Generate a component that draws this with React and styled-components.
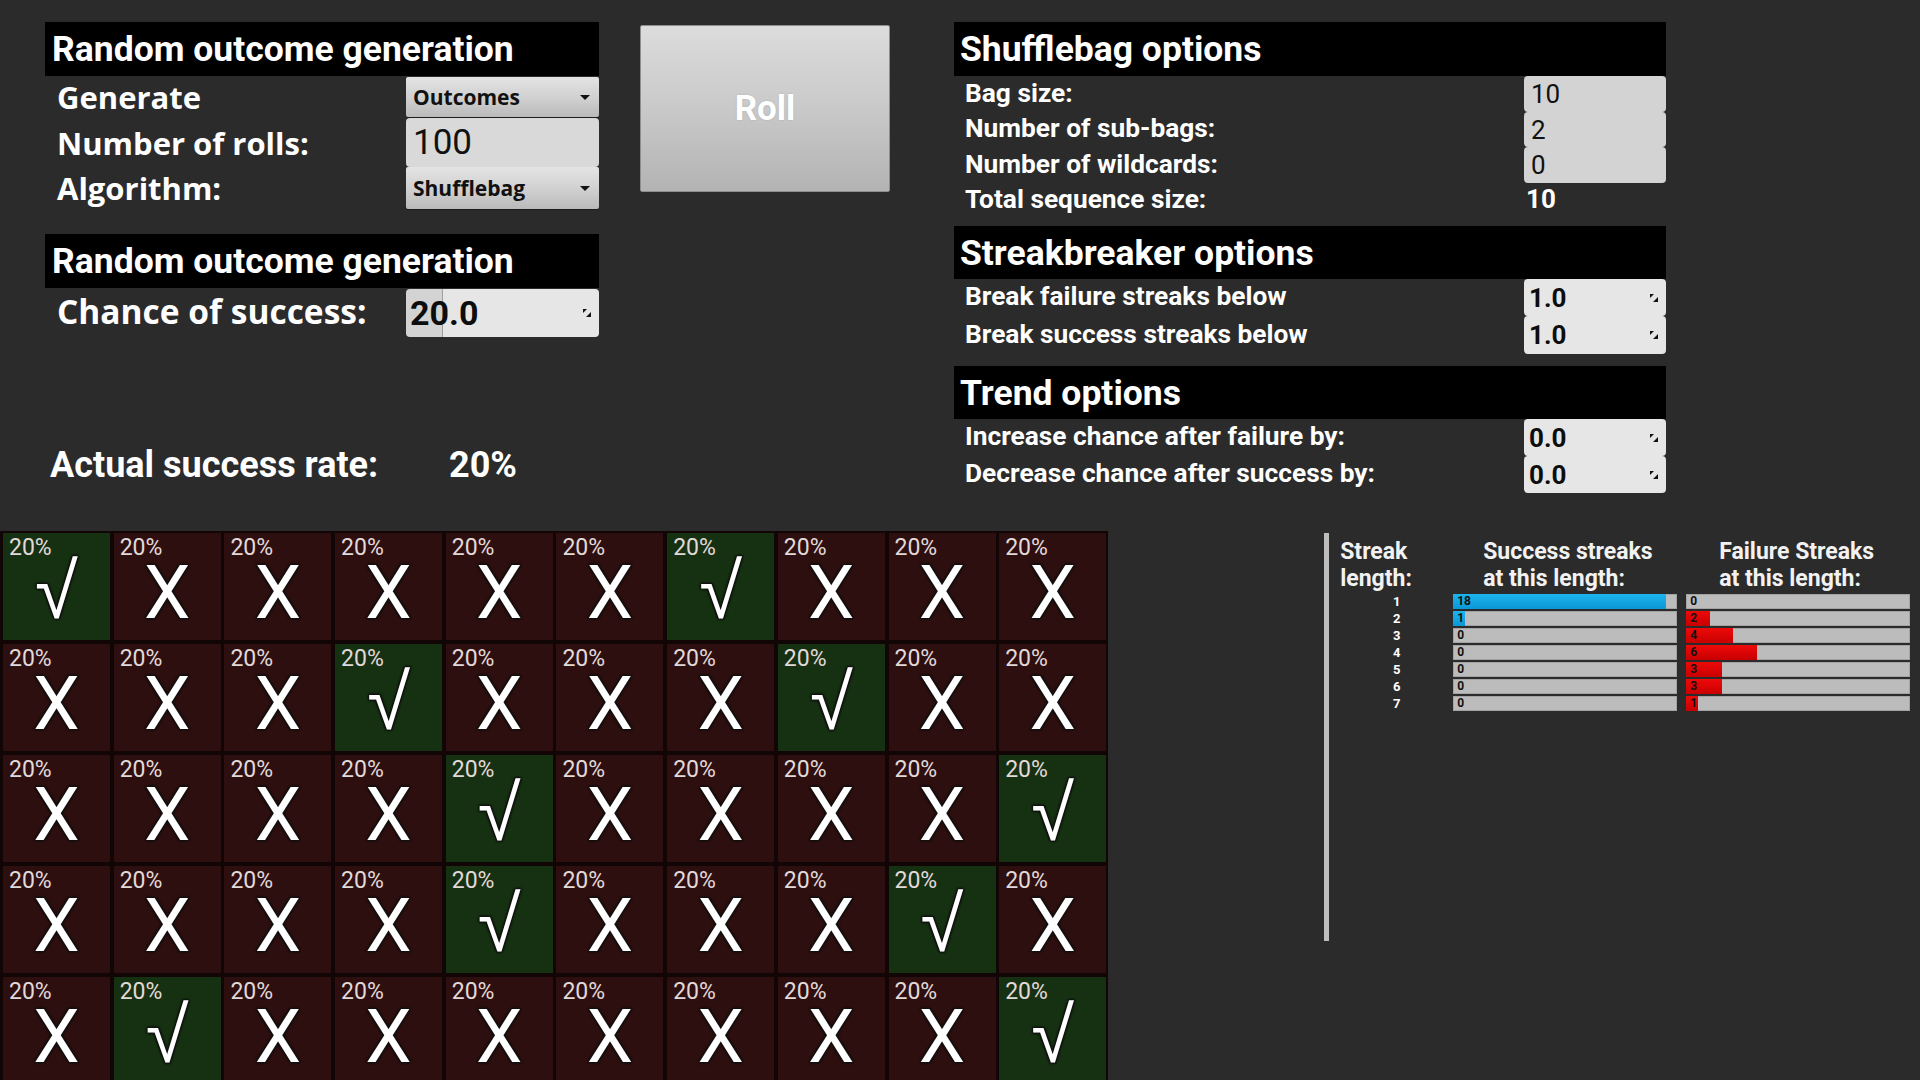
import { Fragment } from 'react';
import styled, { createGlobalStyle } from 'styled-components';

const GlobalStyle = createGlobalStyle`
  html, body {
    margin: 0;
    padding: 0;
    background: #2b2b2b;
  }
  * {
    box-sizing: border-box;
  }
`;

const Page = styled.div`
  width: 1920px;
  height: 1080px;
  overflow: hidden;
  background-color: #2b2b2b;
  font-family: Roboto, 'Liberation Sans', sans-serif;
  color: #fff;
`;

const Top = styled.div`
  display: flex;
  align-items: flex-start;
  height: 531px;
  padding-top: 22px;
`;

const LeftCol = styled.div`
  display: flex;
  flex-direction: column;
  width: 554px;
  margin-left: 45px;
`;

const SectionHeader = styled.div`
  height: ${(p) => p.$h || 54}px;
  margin-top: ${(p) => p.$mt || 0}px;
  background-color: #000;
  display: flex;
  align-items: center;
  padding-left: ${(p) => p.$pl || 7}px;
  font-size: 35.5px;
  font-weight: 700;
  white-space: nowrap;
`;

const FormGrid = styled.div`
  display: grid;
  grid-template-columns: 361px 193px;
  align-items: center;
`;

const BigLabel = styled.div`
  padding-left: 12px;
  padding-bottom: ${(p) => (p.$fs ? 4 : 0)}px;
  font-family: 'Open Sans', 'Noto Sans', sans-serif;
  font-size: ${(p) => p.$fs || 31}px;
  font-weight: 700;
  white-space: nowrap;
`;

const Dropdown = styled.div`
  height: ${(p) => p.$h}px;
  display: flex;
  align-items: center;
  justify-content: space-between;
  padding: 0 9px 0 7px;
  background: linear-gradient(180deg, #e4e4e4 0%, #cdcdcd 60%, #bababa 100%);
  border-radius: 2px;
  box-shadow: 0 1px 0 #1c1c1c;
  color: #111;
  font-family: 'Open Sans', 'Noto Sans', sans-serif;
  font-size: 21px;
  font-weight: 700;
`;

const Caret = styled.span`
  width: 0;
  height: 0;
  border-left: 5px solid transparent;
  border-right: 5px solid transparent;
  border-top: 5px solid #111;
`;

const TextBox = styled.div`
  height: ${(p) => p.$h}px;
  display: flex;
  align-items: center;
  padding-left: ${(p) => p.$pl || 7}px;
  background-color: ${(p) => p.$bg || '#d9d9d9'};
  border-radius: 4px;
  color: #111;
  font-size: ${(p) => p.$fs || 35}px;
  font-weight: ${(p) => (p.$bold ? 700 : 400)};
`;

const SpinBox = styled.div`
  height: ${(p) => p.$h}px;
  display: flex;
  align-items: center;
  justify-content: space-between;
  padding: 0 8px 0 ${(p) => p.$pl || 5}px;
  background: ${(p) =>
    p.$knob
      ? 'linear-gradient(90deg, #d3d3d3 0 36px, #9e9e9e 36px 37px, #e6e6e6 37px)'
      : '#e6e6e6'};
  border-radius: 4px;
  color: #0d0d0d;
  font-size: ${(p) => p.$fs || 26}px;
  font-weight: 700;
`;

const RateRow = styled.div`
  display: flex;
  align-items: center;
  height: 40px;
  margin-top: 107px;
  margin-left: 5px;
  font-size: 36px;
  font-weight: 700;
`;

const RateLabel = styled.span`
  width: 399px;
`;

const RollButton = styled.button`
  width: 250px;
  height: 167px;
  margin: 3px 0 0 41px;
  border: 1px solid #8d8d8d;
  border-radius: 2px;
  background: linear-gradient(180deg, #dcdcdc 0%, #c9c9c9 50%, #b3b3b3 100%);
  color: #fff;
  font-family: Roboto, 'Liberation Sans', sans-serif;
  font-size: 35px;
  font-weight: 700;
  text-shadow: 0 0 2px rgba(0, 0, 0, 0.15);
  cursor: pointer;
`;

const RightCol = styled.div`
  display: flex;
  flex-direction: column;
  width: 712px;
  margin-left: 64px;
`;

const OptionGrid = styled.div`
  display: grid;
  grid-template-columns: 570px 142px;
  align-items: center;
`;

const OptionLabel = styled.div`
  padding: 0 0 3px 11px;
  font-size: 26.3px;
  font-weight: 700;
  white-space: nowrap;
`;

const OptionValue = styled.div`
  height: 35px;
  display: flex;
  align-items: center;
  padding: 0 0 3px 2px;
  font-size: 26px;
  font-weight: 700;
`;

const Bottom = styled.div`
  display: flex;
  align-items: flex-start;
`;

const Outcomes = styled.div`
  display: grid;
  grid-template-columns: repeat(10, 107px);
  grid-auto-rows: 107px;
  column-gap: 3.7px;
  row-gap: 4px;
  padding: 2px 2px 4px 3px;
  background-color: #110505;
`;

const Cell = styled.div`
  display: flex;
  flex-direction: column;
  background-color: ${(p) => (p.$ok ? '#163112' : '#2e0f0f')};
  overflow: hidden;
`;

const Percent = styled.div`
  height: 30px;
  line-height: 30px;
  padding-left: 6px;
  font-size: 23px;
  color: #e2d9d9;
`;

const Mark = styled.div`
  height: 60px;
  line-height: ${(p) => (p.$ok ? 56 : 60)}px;
  text-align: center;
  font-family: ${(p) => (p.$ok ? "'Liberation Sans', 'DejaVu Sans'" : 'Roboto')}, sans-serif;
  font-size: ${(p) => (p.$ok ? 78 : 74)}px;
  color: #fff;
  text-shadow: 0 0 2px #111, 1px 1px 2px #111, -1px -1px 2px #111,
    1px -1px 2px #111, -1px 1px 2px #111;
`;

const Chart = styled.div`
  margin: 2px 0 0 216px;
  height: 408px;
  border-left: 5px solid #bdbdbd;
  padding: 5px 0 0 11px;
`;

const ChartGrid = styled.div`
  display: grid;
  grid-template-columns: 113px 224px 9px 224px;
  grid-template-rows: 54px;
  grid-auto-rows: 15px;
  row-gap: 2px;
`;

const ChartHead = styled.div`
  padding-left: ${(p) => p.$pl || 0}px;
  font-size: 23px;
  font-weight: 700;
  line-height: 27px;
  color: #f2f2f2;
  white-space: nowrap;
`;

const LengthNum = styled.div`
  text-align: center;
  font-size: 13px;
  font-weight: 700;
  line-height: 15px;
  color: #fff;
`;

const Bar = styled.div`
  position: relative;
  height: 15px;
  background-color: #bcbcbc;
  box-shadow: inset 0 0 0 1px #a3a3a3;
  overflow: hidden;
`;

const BarFill = styled.div`
  height: 100%;
  background: ${(p) =>
    p.$kind === 'success'
      ? 'linear-gradient(180deg, #1cb4ee 0%, #0a98d6 100%)'
      : 'linear-gradient(180deg, #ee0a0a 0%, #c80000 100%)'};
`;

const BarText = styled.span`
  position: absolute;
  left: 4px;
  top: 0;
  font-size: 12px;
  font-weight: 700;
  line-height: 15px;
  color: #111;
`;

function SpinIcon() {
  return (
    <svg width="8" height="8" viewBox="0 0 8 8">
      <path d="M0 0 H4 L0 4 Z M8 3 V8 H3 Z" fill="#111" />
    </svg>
  );
}

const successAt = [
  [0, 6],
  [3, 7],
  [4, 9],
  [4, 8],
  [1, 9],
];

const successStreaks = [18, 1, 0, 0, 0, 0, 0];
const failureStreaks = [0, 2, 4, 6, 3, 3, 1];
const UNIT = 11.8;

function StreakBar({ kind, value }) {
  return (
    <Bar>
      <BarFill $kind={kind} style={{ width: value * UNIT }} />
      <BarText>{value}</BarText>
    </Bar>
  );
}

export default function App() {
  return (
    <Page>
      <GlobalStyle />
      <Top>
        <LeftCol>
          <SectionHeader>Random outcome generation</SectionHeader>
          <FormGrid>
            <BigLabel>Generate</BigLabel>
            <Dropdown $h={40}>
              Outcomes
              <Caret />
            </Dropdown>
            <BigLabel>Number of rolls:</BigLabel>
            <TextBox $h={49}>100</TextBox>
            <BigLabel>Algorithm:</BigLabel>
            <Dropdown $h={42}>
              Shufflebag
              <Caret />
            </Dropdown>
          </FormGrid>
          <SectionHeader $mt={25}>Random outcome generation</SectionHeader>
          <FormGrid>
            <BigLabel $fs={33.5}>Chance of success:</BigLabel>
            <SpinBox $h={48} $knob $fs={34} $pl={4}>
              20.0
              <SpinIcon />
            </SpinBox>
          </FormGrid>
          <RateRow>
            <RateLabel>Actual success rate:</RateLabel>
            <span>20%</span>
          </RateRow>
        </LeftCol>

        <RollButton>Roll</RollButton>

        <RightCol>
          <SectionHeader $pl={6}>Shufflebag options</SectionHeader>
          <OptionGrid>
            <OptionLabel>Bag size:</OptionLabel>
            <TextBox $h={36} $fs={26} $bg="#d3d3d3">10</TextBox>
            <OptionLabel>Number of sub-bags:</OptionLabel>
            <TextBox $h={35} $fs={26} $bg="#d3d3d3">2</TextBox>
            <OptionLabel>Number of wildcards:</OptionLabel>
            <TextBox $h={36} $fs={26} $bg="#d3d3d3">0</TextBox>
            <OptionLabel>Total sequence size:</OptionLabel>
            <OptionValue>10</OptionValue>
          </OptionGrid>

          <SectionHeader $mt={8} $h={53} $pl={6}>Streakbreaker options</SectionHeader>
          <OptionGrid>
            <OptionLabel>Break failure streaks below</OptionLabel>
            <SpinBox $h={37}>
              1.0
              <SpinIcon />
            </SpinBox>
            <OptionLabel>Break success streaks below</OptionLabel>
            <SpinBox $h={38}>
              1.0
              <SpinIcon />
            </SpinBox>
          </OptionGrid>

          <SectionHeader $mt={12} $h={53} $pl={6}>Trend options</SectionHeader>
          <OptionGrid>
            <OptionLabel>Increase chance after failure by:</OptionLabel>
            <SpinBox $h={37}>
              0.0
              <SpinIcon />
            </SpinBox>
            <OptionLabel>Decrease chance after success by:</OptionLabel>
            <SpinBox $h={37}>
              0.0
              <SpinIcon />
            </SpinBox>
          </OptionGrid>
        </RightCol>
      </Top>

      <Bottom>
        <Outcomes>
          {successAt.map((row, r) =>
            Array.from({ length: 10 }, (_, c) => {
              const ok = row.includes(c);
              return (
                <Cell key={`${r}-${c}`} $ok={ok}>
                  <Percent>20%</Percent>
                  <Mark $ok={ok}>{ok ? '√' : 'X'}</Mark>
                </Cell>
              );
            })
          )}
        </Outcomes>

        <Chart>
          <ChartGrid>
            <ChartHead>
              Streak
              <br />
              length:
            </ChartHead>
            <ChartHead $pl={30}>
              Success streaks
              <br />
              at this length:
            </ChartHead>
            <div />
            <ChartHead $pl={33}>
              Failure Streaks
              <br />
              at this length:
            </ChartHead>
            {successStreaks.map((s, i) => (
              <Fragment key={i}>
                <LengthNum>{i + 1}</LengthNum>
                <StreakBar kind="success" value={s} />
                <div />
                <StreakBar kind="failure" value={failureStreaks[i]} />
              </Fragment>
            ))}
          </ChartGrid>
        </Chart>
      </Bottom>
    </Page>
  );
}
